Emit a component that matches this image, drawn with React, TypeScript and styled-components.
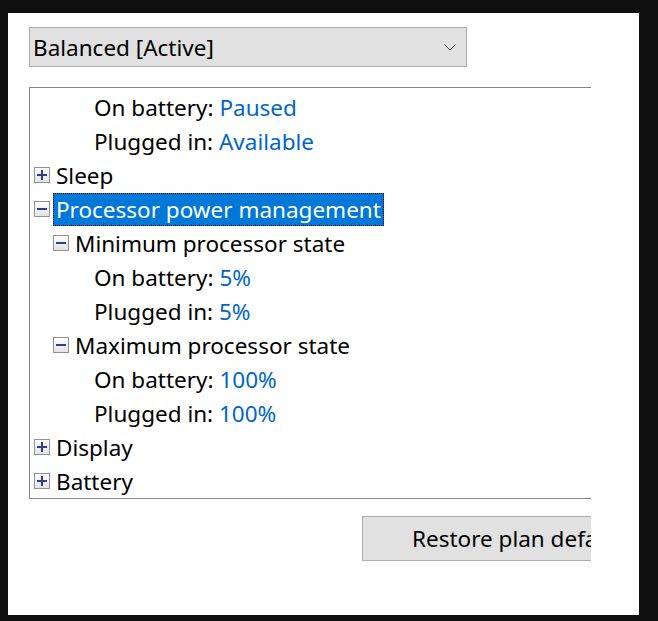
import React from "react";
import styled, { createGlobalStyle } from "styled-components";

type Node = {
  label: string;
  value?: string;
  level: number;
  expand?: "plus" | "minus";
  selected?: boolean;
};

const rows: Node[] = [
  { label: "On battery:", value: "Paused", level: 2 },
  { label: "Plugged in:", value: "Available", level: 2 },
  { label: "Sleep", level: 0, expand: "plus" },
  { label: "Processor power management", level: 0, expand: "minus", selected: true },
  { label: "Minimum processor state", level: 1, expand: "minus" },
  { label: "On battery:", value: "5%", level: 2 },
  { label: "Plugged in:", value: "5%", level: 2 },
  { label: "Maximum processor state", level: 1, expand: "minus" },
  { label: "On battery:", value: "100%", level: 2 },
  { label: "Plugged in:", value: "100%", level: 2 },
  { label: "Display", level: 0, expand: "plus" },
  { label: "Battery", level: 0, expand: "plus" },
];

export default function App() {
  return (
    <>
      <GlobalStyle />
      <ScWindow>
        <ScClip>
          <ScSelect>
            <span>Balanced [Active]</span>
            <svg width="12" height="7" viewBox="0 0 12 7">
              <path d="M0.5 0.5 L6 6 L11.5 0.5" fill="none" stroke="#444" strokeWidth="1" />
            </svg>
          </ScSelect>
          <ScTree>
            {rows.map((row, i) => (
              <ScRow key={i} $level={row.level}>
                {row.expand ? (
                  <ScExpander>
                    <svg width="10" height="10" viewBox="0 0 10 10">
                      <rect x="0" y="4" width="10" height="2" fill="#2b3f8f" />
                      {row.expand === "plus" && (
                        <rect x="4" y="0" width="2" height="10" fill="#2b3f8f" />
                      )}
                    </svg>
                  </ScExpander>
                ) : (
                  <ScLeafSpacer />
                )}
                <ScLabel $selected={row.selected}>
                  {row.label}
                  {row.value && <ScValue> {row.value}</ScValue>}
                </ScLabel>
              </ScRow>
            ))}
          </ScTree>
          <ScFooter>
            <ScButton>Restore plan defaults</ScButton>
          </ScFooter>
        </ScClip>
      </ScWindow>
    </>
  );
}

const GlobalStyle = createGlobalStyle`
  html, body {
    margin: 0;
    padding: 0;
    background: #0f0f0f;
  }
  body {
    font-family: "Noto Sans", "Open Sans", sans-serif;
  }
`;

const ScWindow = styled.div`
  margin: 13px 0 0 8px;
  width: 631px;
  height: 602px;
  background: #ffffff;
  padding: 14px 0 0 21px;
  box-sizing: border-box;
`;

const ScClip = styled.div`
  width: 562px;
  overflow: hidden;
  display: flex;
  flex-direction: column;
`;

const ScSelect = styled.div`
  width: 438px;
  height: 40px;
  box-sizing: border-box;
  background: #e1e1e1;
  border: 1px solid #adadad;
  display: flex;
  align-items: center;
  justify-content: space-between;
  padding: 0 10px 0 3px;
  font-size: 22.5px;
  color: #000;
`;

const ScTree = styled.div`
  margin-top: 20px;
  width: 640px;
  height: 412px;
  box-sizing: border-box;
  border: 1px solid #828790;
  padding-top: 2px;
  overflow: hidden;
  flex-shrink: 0;
`;

const ScRow = styled.div<{ $level: number }>`
  height: 34px;
  display: flex;
  align-items: center;
  padding-left: ${(p) => 4 + p.$level * 19}px;
  font-size: 22.5px;
  color: #000;
  white-space: nowrap;
`;

const ScExpander = styled.div`
  width: 16px;
  height: 16px;
  box-sizing: border-box;
  margin-right: 3px;
  border: 1px solid #919191;
  background: linear-gradient(#ffffff, #e2e2e2);
  display: flex;
  align-items: center;
  justify-content: center;
  flex-shrink: 0;
`;

const ScLeafSpacer = styled.div`
  width: 19px;
  flex-shrink: 0;
`;

const ScLabel = styled.div<{ $selected?: boolean }>`
  height: 33px;
  line-height: 31px;
  box-sizing: border-box;
  padding: 0 2px;
  border: 1px ${(p) => (p.$selected ? "dotted #000" : "solid transparent")};
  background: ${(p) => (p.$selected ? "#0078d7" : "transparent")};
  color: ${(p) => (p.$selected ? "#fff" : "#000")};
`;

const ScValue = styled.span`
  color: #0066cc;
`;

const ScFooter = styled.div`
  margin-top: 17px;
  padding-left: 333px;
  display: flex;
`;

const ScButton = styled.div`
  width: 300px;
  height: 45px;
  flex-shrink: 0;
  box-sizing: border-box;
  background: #e1e1e1;
  border: 1px solid #adadad;
  font-size: 22.5px;
  color: #000;
  display: flex;
  align-items: center;
  padding-left: 49px;
  white-space: nowrap;
`;
